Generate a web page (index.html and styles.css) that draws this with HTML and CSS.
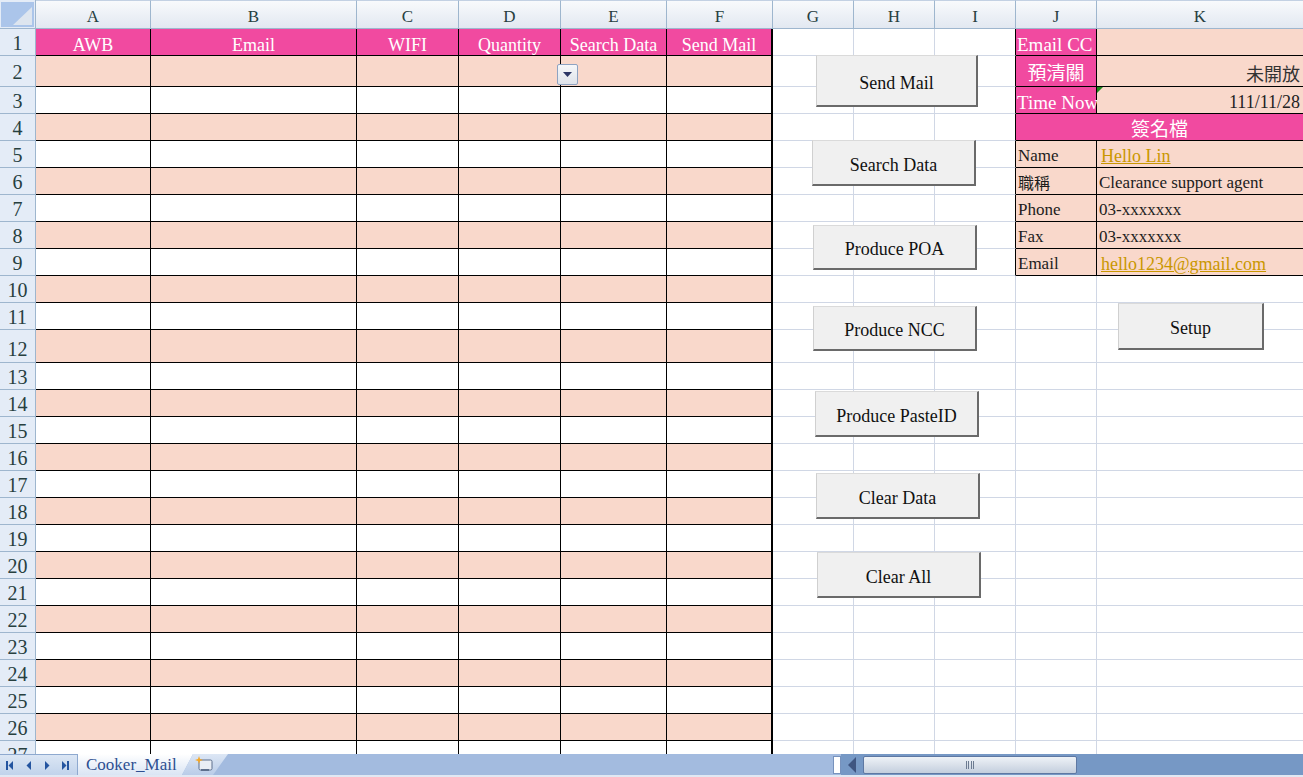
FILE: index.html
```html
<!DOCTYPE html>
<html lang="zh-Hant">
<head>
<meta charset="utf-8">
<title>Cooker_Mail</title>
<link rel="stylesheet" href="styles.css">
</head>
<body>
<div class="app">
  <div class="sheet">
    <div class="row colhdr">
      <div class="corner"><svg width="35" height="28" viewBox="0 0 35 28"><rect x="1" y="2" width="33" height="25" fill="#abc5ea"/><polygon points="32,7 32,25 13,25" fill="#dde5ef"/></svg></div>
      <div class="ch">A</div><div class="ch">B</div><div class="ch">C</div><div class="ch">D</div><div class="ch">E</div><div class="ch">F</div><div class="ch">G</div><div class="ch">H</div><div class="ch">I</div><div class="ch">J</div><div class="ch">K</div>
    </div>

    <div class="row h27">
      <div class="rh">1</div>
      <div class="c t hd">AWB</div><div class="c t hd">Email</div><div class="c t hd">WIFI</div><div class="c t hd">Quantity</div><div class="c t hd">Search Data</div><div class="c t f hd">Send Mail</div>
      <div class="c"></div><div class="c"></div><div class="c ib"></div>
      <div class="c k hd left big">Email CC</div><div class="c k lp"></div>
    </div>
    <div class="row h31">
      <div class="rh">2</div>
      <div class="c t lp"></div><div class="c t lp"></div><div class="c t lp"></div><div class="c t lp"></div><div class="c t lp"></div><div class="c t f lp"></div>
      <div class="c"></div><div class="c"></div><div class="c ib"></div>
      <div class="c k hd cjk">預清關</div><div class="c k lp right cjk2">未開放</div>
    </div>
    <div class="row h27">
      <div class="rh">3</div>
      <div class="c t"></div><div class="c t"></div><div class="c t"></div><div class="c t"></div><div class="c t"></div><div class="c t f"></div>
      <div class="c"></div><div class="c"></div><div class="c ib"></div>
      <div class="c k hd left big">Time Now</div><div class="c k lp right err">111/11/28</div>
    </div>
    <div class="row h27">
      <div class="rh">4</div>
      <div class="c t lp"></div><div class="c t lp"></div><div class="c t lp"></div><div class="c t lp"></div><div class="c t lp"></div><div class="c t f lp"></div>
      <div class="c"></div><div class="c"></div><div class="c ib"></div>
      <div class="c k hd cjk span2">簽名檔</div>
    </div>
    <div class="row h27">
      <div class="rh">5</div>
      <div class="c t"></div><div class="c t"></div><div class="c t"></div><div class="c t"></div><div class="c t"></div><div class="c t f"></div>
      <div class="c"></div><div class="c"></div><div class="c ib"></div>
      <div class="c k lp left">Name</div><div class="c k lp left"><span class="link">Hello Lin</span></div>
    </div>
    <div class="row h27">
      <div class="rh">6</div>
      <div class="c t lp"></div><div class="c t lp"></div><div class="c t lp"></div><div class="c t lp"></div><div class="c t lp"></div><div class="c t f lp"></div>
      <div class="c"></div><div class="c"></div><div class="c ib"></div>
      <div class="c k lp left cjk3">職稱</div><div class="c k lp left">Clearance support agent</div>
    </div>
    <div class="row h27">
      <div class="rh">7</div>
      <div class="c t"></div><div class="c t"></div><div class="c t"></div><div class="c t"></div><div class="c t"></div><div class="c t f"></div>
      <div class="c"></div><div class="c"></div><div class="c ib"></div>
      <div class="c k lp left">Phone</div><div class="c k lp left">03-xxxxxxx</div>
    </div>
    <div class="row h27">
      <div class="rh">8</div>
      <div class="c t lp"></div><div class="c t lp"></div><div class="c t lp"></div><div class="c t lp"></div><div class="c t lp"></div><div class="c t f lp"></div>
      <div class="c"></div><div class="c"></div><div class="c ib"></div>
      <div class="c k lp left">Fax</div><div class="c k lp left">03-xxxxxxx</div>
    </div>
    <div class="row h27">
      <div class="rh">9</div>
      <div class="c t"></div><div class="c t"></div><div class="c t"></div><div class="c t"></div><div class="c t"></div><div class="c t f"></div>
      <div class="c"></div><div class="c"></div><div class="c ib"></div>
      <div class="c k lp left">Email</div><div class="c k lp left"><span class="link">hello1234@gmail.com</span></div>
    </div>
    <div class="row h27">
      <div class="rh">10</div>
      <div class="c t lp"></div><div class="c t lp"></div><div class="c t lp"></div><div class="c t lp"></div><div class="c t lp"></div><div class="c t f lp"></div>
      <div class="c"></div><div class="c"></div><div class="c"></div><div class="c"></div><div class="c"></div>
    </div>
    <div class="row h27">
      <div class="rh">11</div>
      <div class="c t"></div><div class="c t"></div><div class="c t"></div><div class="c t"></div><div class="c t"></div><div class="c t f"></div>
      <div class="c"></div><div class="c"></div><div class="c"></div><div class="c"></div><div class="c"></div>
    </div>
    <div class="row h33">
      <div class="rh low">12</div>
      <div class="c t lp"></div><div class="c t lp"></div><div class="c t lp"></div><div class="c t lp"></div><div class="c t lp"></div><div class="c t f lp"></div>
      <div class="c"></div><div class="c"></div><div class="c"></div><div class="c"></div><div class="c"></div>
    </div>
    <div class="row h27">
      <div class="rh">13</div>
      <div class="c t"></div><div class="c t"></div><div class="c t"></div><div class="c t"></div><div class="c t"></div><div class="c t f"></div>
      <div class="c"></div><div class="c"></div><div class="c"></div><div class="c"></div><div class="c"></div>
    </div>
    <div class="row h27">
      <div class="rh">14</div>
      <div class="c t lp"></div><div class="c t lp"></div><div class="c t lp"></div><div class="c t lp"></div><div class="c t lp"></div><div class="c t f lp"></div>
      <div class="c"></div><div class="c"></div><div class="c"></div><div class="c"></div><div class="c"></div>
    </div>
    <div class="row h27">
      <div class="rh">15</div>
      <div class="c t"></div><div class="c t"></div><div class="c t"></div><div class="c t"></div><div class="c t"></div><div class="c t f"></div>
      <div class="c"></div><div class="c"></div><div class="c"></div><div class="c"></div><div class="c"></div>
    </div>
    <div class="row h27">
      <div class="rh">16</div>
      <div class="c t lp"></div><div class="c t lp"></div><div class="c t lp"></div><div class="c t lp"></div><div class="c t lp"></div><div class="c t f lp"></div>
      <div class="c"></div><div class="c"></div><div class="c"></div><div class="c"></div><div class="c"></div>
    </div>
    <div class="row h27">
      <div class="rh">17</div>
      <div class="c t"></div><div class="c t"></div><div class="c t"></div><div class="c t"></div><div class="c t"></div><div class="c t f"></div>
      <div class="c"></div><div class="c"></div><div class="c"></div><div class="c"></div><div class="c"></div>
    </div>
    <div class="row h27">
      <div class="rh">18</div>
      <div class="c t lp"></div><div class="c t lp"></div><div class="c t lp"></div><div class="c t lp"></div><div class="c t lp"></div><div class="c t f lp"></div>
      <div class="c"></div><div class="c"></div><div class="c"></div><div class="c"></div><div class="c"></div>
    </div>
    <div class="row h27">
      <div class="rh">19</div>
      <div class="c t"></div><div class="c t"></div><div class="c t"></div><div class="c t"></div><div class="c t"></div><div class="c t f"></div>
      <div class="c"></div><div class="c"></div><div class="c"></div><div class="c"></div><div class="c"></div>
    </div>
    <div class="row h27">
      <div class="rh">20</div>
      <div class="c t lp"></div><div class="c t lp"></div><div class="c t lp"></div><div class="c t lp"></div><div class="c t lp"></div><div class="c t f lp"></div>
      <div class="c"></div><div class="c"></div><div class="c"></div><div class="c"></div><div class="c"></div>
    </div>
    <div class="row h27">
      <div class="rh">21</div>
      <div class="c t"></div><div class="c t"></div><div class="c t"></div><div class="c t"></div><div class="c t"></div><div class="c t f"></div>
      <div class="c"></div><div class="c"></div><div class="c"></div><div class="c"></div><div class="c"></div>
    </div>
    <div class="row h27">
      <div class="rh">22</div>
      <div class="c t lp"></div><div class="c t lp"></div><div class="c t lp"></div><div class="c t lp"></div><div class="c t lp"></div><div class="c t f lp"></div>
      <div class="c"></div><div class="c"></div><div class="c"></div><div class="c"></div><div class="c"></div>
    </div>
    <div class="row h27">
      <div class="rh">23</div>
      <div class="c t"></div><div class="c t"></div><div class="c t"></div><div class="c t"></div><div class="c t"></div><div class="c t f"></div>
      <div class="c"></div><div class="c"></div><div class="c"></div><div class="c"></div><div class="c"></div>
    </div>
    <div class="row h27">
      <div class="rh">24</div>
      <div class="c t lp"></div><div class="c t lp"></div><div class="c t lp"></div><div class="c t lp"></div><div class="c t lp"></div><div class="c t f lp"></div>
      <div class="c"></div><div class="c"></div><div class="c"></div><div class="c"></div><div class="c"></div>
    </div>
    <div class="row h27">
      <div class="rh">25</div>
      <div class="c t"></div><div class="c t"></div><div class="c t"></div><div class="c t"></div><div class="c t"></div><div class="c t f"></div>
      <div class="c"></div><div class="c"></div><div class="c"></div><div class="c"></div><div class="c"></div>
    </div>
    <div class="row h27">
      <div class="rh">26</div>
      <div class="c t lp"></div><div class="c t lp"></div><div class="c t lp"></div><div class="c t lp"></div><div class="c t lp"></div><div class="c t f lp"></div>
      <div class="c"></div><div class="c"></div><div class="c"></div><div class="c"></div><div class="c"></div>
    </div>
    <div class="row h27">
      <div class="rh">27</div>
      <div class="c t"></div><div class="c t"></div><div class="c t"></div><div class="c t"></div><div class="c t"></div><div class="c t f"></div>
      <div class="c"></div><div class="c"></div><div class="c"></div><div class="c"></div><div class="c"></div>
    </div>

    <div class="dd"><svg width="9" height="5" viewBox="0 0 9 5"><polygon points="0,0 9,0 4.5,5" fill="#2c3565"/></svg></div>

    <div class="btn b-send">Send Mail</div>
    <div class="btn b-search">Search Data</div>
    <div class="btn b-poa">Produce POA</div>
    <div class="btn b-ncc">Produce NCC</div>
    <div class="btn b-paste">Produce PasteID</div>
    <div class="btn b-cdata">Clear Data</div>
    <div class="btn b-call">Clear All</div>
    <div class="btn b-setup">Setup</div>
  </div>

  <div class="tabbar">
    <div class="nav">
      <svg width="77" height="21" viewBox="0 0 77 21">
        <rect x="6" y="6" width="2" height="9" fill="#2455a0"/>
        <polygon points="13,6 13,15 8.5,10.5" fill="#2455a0"/>
        <polygon points="31,6 31,15 26.5,10.5" fill="#2455a0"/>
        <polygon points="45,6 45,15 49.5,10.5" fill="#2455a0"/>
        <polygon points="62,6 62,15 66.5,10.5" fill="#2455a0"/>
        <rect x="67" y="6" width="2" height="9" fill="#2455a0"/>
      </svg>
    </div>
    <div class="tab">Cooker_Mail</div>
    <div class="newtab">
      <svg width="18" height="16" viewBox="0 0 18 16">
        <rect x="4" y="4" width="13" height="10" rx="1.5" fill="#e9eef5" stroke="#5d6f8c"/>
        <rect x="6" y="13" width="8" height="2" fill="#5d6f8c"/>
        <polygon points="4,0 5,3 8,4 5,5 4,8 3,5 0,4 3,3" fill="#f5a623"/>
      </svg>
    </div>
    <div class="spacer"></div>
    <div class="splitter"></div>
    <div class="hscroll">
      <svg class="larr" width="8" height="16" viewBox="0 0 8 16"><polygon points="8,0 8,16 0,8" fill="#3f5581"/></svg>
      <div class="thumb"><span class="grip"></span></div>
    </div>
  </div>
</div>
</body>
</html>
```

FILE: styles.css
```css
* { box-sizing: border-box; }
html, body { margin: 0; padding: 0; }
body {
  width: 1303px;
  height: 777px;
  overflow: hidden;
  background: #ffffff;
  font-family: "Liberation Serif", "Noto Sans CJK TC", serif;
}
.app {
  width: 1303px;
  height: 777px;
  display: flex;
  flex-direction: column;
  overflow: hidden;
}
.sheet {
  position: relative;
  height: 754px;
  flex: none;
  overflow: hidden;
}
.row {
  display: grid;
  grid-template-columns: 36px 115px 206px 102px 102px 106px 106px 81px 81px 81px 81px 207px;
  grid-template-rows: 100%;
  width: 1304px;
}
.h27 { height: 27px; }
.h31 { height: 31px; }
.h33 { height: 33px; }
.colhdr { height: 29px; }

.corner {
  background: #e4ecf7;
  border-right: 1px solid #9eb6ce;
  border-bottom: 1px solid #9eb6ce;
  line-height: 0;
}
.ch {
  background: linear-gradient(#f8fafc, #e2e8f1);
  border-top: 1px solid #c3d1e3;
  border-right: 1px solid #9eb6ce;
  border-bottom: 1px solid #9eb6ce;
  display: flex;
  justify-content: center;
  align-items: flex-end;
  padding-bottom: 1px;
  font-size: 17px;
  line-height: 20px;
  color: #27403f;
}
.rh {
  background: #e4ecf7;
  border-right: 1px solid #9eb6ce;
  border-bottom: 1px solid #9eb6ce;
  display: flex;
  align-items: center;
  justify-content: center;
  padding-top: 2px;
  font-size: 20px;
  line-height: 20px;
  color: #27403f;
  min-height: 0;
}
.rh.low { padding-top: 6px; }

.c {
  position: relative;
  min-height: 0;
  border-right: 1px solid #d0d7e5;
  border-bottom: 1px solid #d0d7e5;
  display: flex;
  align-items: center;
  padding-top: 4px;
  white-space: nowrap;
  font-size: 17px;
  line-height: 18px;
  color: #1c1c1c;
}
.t { border-color: #000; }
.f { border-right: 2px solid #000; }
.ib { border-right-color: #000; }
.k { border-color: #000; }
.hd {
  background: #f14aa0;
  color: #ffffff;
  justify-content: center;
  padding-top: 5px;
  font-size: 18px;
}
.lp { background: #f9d8cb; }
.left { justify-content: flex-start; padding-left: 2px; }
.right { justify-content: flex-end; padding-right: 3px; }
.big { font-size: 19px; padding-left: 1px; }
.span2 { grid-column: span 2; }
.cjk { font-family: "Noto Sans CJK TC", sans-serif; font-size: 19px; padding-top: 2px; }
.cjk2 { font-family: "Noto Sans CJK TC", sans-serif; font-size: 18px; color: #333; padding-top: 3px; }
.cjk3 { font-family: "Noto Sans CJK TC", sans-serif; font-size: 16px; padding-top: 2px; }
.right.err { font-size: 18px; color: #222; }
.err::before {
  content: "";
  position: absolute;
  left: 0;
  top: 0;
  border-top: 6px solid #1d8a1d;
  border-right: 6px solid transparent;
}
.link { color: #c99700; text-decoration: underline; padding-left: 2px; font-size: 18px; }

.dd {
  position: absolute;
  left: 557px;
  top: 64px;
  width: 21px;
  height: 21px;
  border: 1px solid #8ea3c2;
  border-radius: 2px;
  background: linear-gradient(#f6f7f9, #dfe3ea);
  display: flex;
  align-items: center;
  justify-content: center;
}

.btn {
  position: absolute;
  background: #f0f0f0;
  border-top: 1px solid #dadada;
  border-left: 1px solid #d0d0d0;
  border-right: 2px solid #6a6a6a;
  border-bottom: 2px solid #6a6a6a;
  display: flex;
  align-items: center;
  justify-content: center;
  padding-top: 4px;
  font-size: 18px;
  line-height: 20px;
  color: #111;
  white-space: nowrap;
}
.b-send   { left: 816px;  top: 55px;  width: 162px; height: 52px; }
.b-search { left: 812px;  top: 140px; width: 164px; height: 46px; }
.b-poa    { left: 813px;  top: 225px; width: 164px; height: 45px; }
.b-ncc    { left: 813px;  top: 306px; width: 164px; height: 45px; }
.b-paste  { left: 815px;  top: 391px; width: 164px; height: 46px; }
.b-cdata  { left: 816px;  top: 473px; width: 164px; height: 46px; }
.b-call   { left: 817px;  top: 552px; width: 164px; height: 46px; }
.b-setup  { left: 1118px; top: 303px; width: 146px; height: 47px; }

.tabbar {
  flex: none;
  height: 23px;
  display: flex;
  background: #a3bbdf;
  border-bottom: 2px solid #e1e8f3;
}
.nav {
  width: 78px;
  flex: none;
  background: linear-gradient(#dbe6f4, #c1d3eb);
  border-top: 1px solid #8ea9cf;
  border-right: 1px solid #8ea9cf;
  line-height: 0;
}
.tab {
  width: 115px;
  flex: none;
  clip-path: polygon(0 0, 100% 0, calc(100% - 11px) 100%, 0 100%);
  background: linear-gradient(#ffffff, #dae5f4);
  color: #2d4f91;
  font-size: 17px;
  line-height: 21px;
  padding-left: 8px;
  white-space: nowrap;
}
.newtab {
  width: 46px;
  flex: none;
  margin-left: -11px;
  clip-path: polygon(11px 0, 100% 0, calc(100% - 15px) 100%, 0 100%);
  background: linear-gradient(#dde7f5, #b9cce8);
  padding: 2px 0 0 13px;
  line-height: 0;
}
.spacer { flex: 1; }
.splitter {
  width: 8px;
  flex: none;
  margin: 2px 0 1px;
  background: #ffffff;
  border: 1px solid #7792bd;
}
.hscroll {
  width: 462px;
  flex: none;
  background: #7698c5;
  display: flex;
  align-items: center;
  padding-left: 7px;
}
.larr { flex: none; }
.thumb {
  width: 214px;
  height: 18px;
  margin-left: 7px;
  border: 1px solid #5e78a3;
  border-radius: 2px;
  background: linear-gradient(#eef2f7, #d9e0ea 50%, #c3cedd);
  display: flex;
  align-items: center;
  justify-content: center;
}
.grip {
  width: 9px;
  height: 8px;
  background: repeating-linear-gradient(90deg, #6c7b91 0 1px, transparent 1px 2.5px);
}
```
